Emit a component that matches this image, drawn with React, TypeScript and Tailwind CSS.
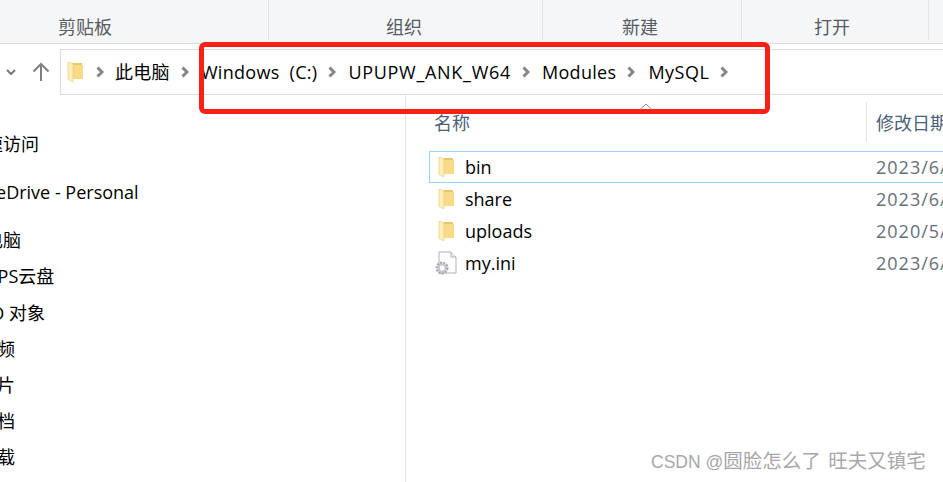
import React from "react";

const FONT = "font-['Open_Sans','Noto_Sans_CJK_SC',sans-serif]";

// Explorer style folder, the pale yellow one
const FolderIcon: React.FC<{ className?: string }> = ({ className = "" }) => (
  <svg viewBox="0 0 16 22" className={className}>
    <path d="M5 2h10v16H5z" fill="#e9c66c" />
    <path d="M5 4h11v14H5z" fill="#f8da88" />
    <path d="M1 1l5 1.500V21l-5-2.500z" fill="#fdedb6" stroke="#e8cb7c" strokeWidth="0.6" />
  </svg>
);

const IniIcon: React.FC = () => (
  <svg viewBox="0 0 22 24" className="h-6 w-[22px]">
    <path d="M4 1h12l5 5v16H4z" fill="#fdfdfe" stroke="#aeb4ba" />
    <path d="M16 1v5h5" fill="#eef0f2" stroke="#aeb4ba" />
    <circle cx="7" cy="17" r="5" fill="none" stroke="#a3a9ae" strokeWidth="3" strokeDasharray="2 1" />
    <circle cx="7" cy="17" r="3.600" fill="none" stroke="#c2c7cb" strokeWidth="2" />
  </svg>
);

const Crumb: React.FC = () => (
  <svg viewBox="0 0 8 12" className="h-3 w-2 shrink-0">
    <path d="M1.500 1.500L6 6l-4.500 4.500" fill="none" stroke="#858585" strokeWidth="3" />
  </svg>
);

const ribbon = [
  { label: "剪贴板", w: "w-[269px]", pl: "pl-[58px]" },
  { label: "组织", w: "w-[274px]", pl: "pl-[117px]" },
  { label: "新建", w: "w-[199px]", pl: "pl-[79px]" },
  { label: "打开", w: "w-[187px]", pl: "pl-[72px]" },
];

const path = [
  { label: "此电脑", track: "tracking-[0.3px]", pr: "pr-[12px]" },
  { label: "Windows  (C:)", track: "tracking-[0.3px]", pr: "pr-[12px]" },
  { label: "UPUPW_ANK_W64", track: "tracking-[0.7px]", pr: "pr-[12px]" },
  { label: "Modules", track: "tracking-[0.3px]", pr: "pr-[13px]" },
  { label: "MySQL", track: "tracking-[0.5px]", pr: "pr-[12px]" },
];

const side = [
  { label: "快速访问", ml: "ml-[-33px]", mb: "mb-[30px]" },
  { label: "OneDrive - Personal", ml: "ml-[-29px]", mb: "mb-[30px]" },
  { label: "此电脑", ml: "ml-[-33px]", mb: "mb-[18px]" },
  { label: "WPS云盘", ml: "ml-[-19px]", mb: "mb-[19px]" },
  { label: "3D 对象", ml: "ml-[-19px]", mb: "mb-[18px]" },
  { label: "视频", ml: "ml-[-21px]", mb: "mb-[18px]" },
  { label: "图片", ml: "ml-[-21px]", mb: "mb-[18px]" },
  { label: "文档", ml: "ml-[-21px]", mb: "mb-[18px]" },
  { label: "下载", ml: "ml-[-21px]", mb: "" },
];

const files = [
  { name: "bin", date: "2023/6/", folder: true, selected: true },
  { name: "share", date: "2023/6/", folder: true },
  { name: "uploads", date: "2020/5/", folder: true },
  { name: "my.ini", date: "2023/6/", folder: false },
];

export default function App() {
  return (
    <div className={`relative h-[482px] w-[943px] overflow-hidden bg-white text-[18px] leading-[24px] ${FONT}`}>
      {/* ribbon group labels */}
      <div className="flex h-[44px] border-b border-[#dadbdc] bg-[#f5f6f7]">
        {ribbon.map((r) => (
          <div key={r.label} className={`${r.w} ${r.pl} h-[40px] shrink-0 border-r border-[#e1e3e6] pt-[15px] text-[18px] leading-[24px] text-[#565b61]`}>
            {r.label}
          </div>
        ))}
      </div>

      {/* nav + address bar */}
      <div className="flex h-[51px] items-start pt-[5px]">
        <div className="flex h-[46px] w-[60px] shrink-0 items-center">
          <svg viewBox="0 0 10 6" className="ml-[6px] h-[6px] w-[10px]">
            <path d="M1 1l4 4 4-4" fill="none" stroke="#777" strokeWidth="2" />
          </svg>
          <svg viewBox="0 0 18 20" className="ml-[16px] h-5 w-[18px]">
            <path d="M9 19V2M1.500 9.500L9 2l7.500 7.500" fill="none" stroke="#7f7f7f" strokeWidth="2" />
          </svg>
        </div>
        <div className="flex h-[46px] flex-1 items-center border-y border-l border-[#dcdcdc] pl-[6px]">
          <FolderIcon className="h-[22px] w-4 shrink-0" />
          <div className="ml-[13px] mr-[11px]">
            <Crumb />
          </div>
          {path.map((p) => (
            <div key={p.label} className={`flex shrink-0 items-center gap-[11px] whitespace-pre text-black ${p.pr} ${p.track}`}>
              <span>{p.label}</span>
              <Crumb />
            </div>
          ))}
        </div>
      </div>

      <div className="flex h-[387px]">
        {/* nav pane, cut off at the left of the crop */}
        <div className="h-full w-[406px] shrink-0 overflow-hidden border-r border-[#e6e6e6] pt-[40px] text-black">
          {side.map((s) => (
            <div key={s.label} className={`${s.ml} ${s.mb} h-[18px] whitespace-pre leading-[18px]`}>
              {s.label}
            </div>
          ))}
        </div>

        {/* file list */}
        <div className="relative flex-1 pl-[23px]">
          <div className="relative flex h-[56px] items-start">
            <div className="h-[24px] w-[437px] pl-[5px] pt-[16px] text-[#4c607a]">
              <span className="leading-[24px]">名称</span>
            </div>
            <div className="mt-[7px] h-[40px] whitespace-pre border-l border-[#e5e5e5] pl-[9px] pt-[9px] text-[#4c607a]">修改日期</div>
          </div>
          <div className="flex flex-col">
            {files.map((f) => (
              <div key={f.name} className={`flex h-[32px] items-center border ${f.selected ? "border-[#99d1ff]" : "border-transparent"}`}>
                <div className="flex w-[35px] shrink-0 justify-center pr-[3px]">
                  {f.folder ? <FolderIcon className="h-[22px] w-4" /> : <IniIcon />}
                </div>
                <div className="w-[411px] shrink-0 text-black">{f.name}</div>
                <div className="whitespace-pre tracking-[1px] text-[#666f7a]">{f.date}</div>
              </div>
            ))}
          </div>
        </div>
      </div>

      {/* red annotation drawn over the screenshot */}
      <div className="absolute left-[199px] top-[42px] h-[72px] w-[571px] rounded-[6px] border-[5px] border-[#fb2015]" />
      {/* sort arrow */}
      <svg viewBox="0 0 14 7" className="absolute left-[639px] top-[103px] h-[7px] w-[14px]">
        <path d="M1 6.500L7 1l6 5.500" fill="none" stroke="#8c8c8c" />
      </svg>
      {/* watermark */}
      <div className="absolute left-[651px] top-[449px] whitespace-pre font-['Liberation_Sans','Noto_Sans_CJK_SC',sans-serif] text-[19.500px] leading-[24px] text-[#a8a8a8]">
        <span className="text-[17.500px]">CSDN @</span>圆脸怎么了 <span className="ml-[2px]">旺夫又镇宅</span>
      </div>
    </div>
  );
}
